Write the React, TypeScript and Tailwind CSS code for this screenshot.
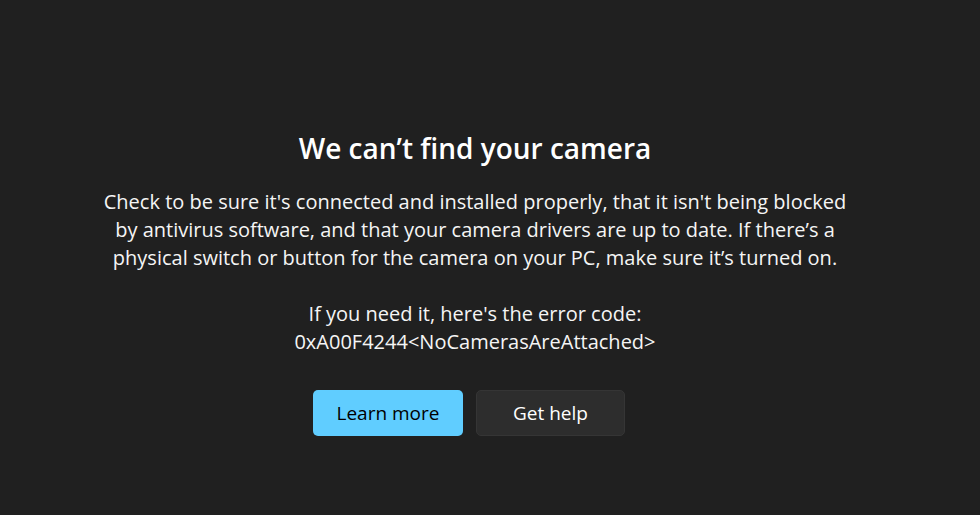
import React from "react";

export default function App() {
  return (
    <div className="w-[980px] h-[515px] bg-[#202020] flex">
      <div
        className="w-[950px] text-white flex flex-col items-center pt-[130px]"
        style={{ fontFamily: '"Open Sans", "Noto Sans", sans-serif' }}
      >
        <h1 className="text-[28px] leading-[36px] font-semibold">
          We can’t find your camera
        </h1>
        <div className="mt-[22px] text-[20px] leading-[28px] text-center text-[#f5f5f5]">
          <p>
            Check to be sure it's connected and installed properly, that it isn't being blocked
            <br />
            by antivirus software, and that your camera drivers are up to date. If there’s a
            <br />
            physical switch or button for the camera on your PC, make sure it’s turned on.
          </p>
          <p className="mt-[28px]">
            If you need it, here's the error code:
            <br />
            0xA00F4244&lt;NoCamerasAreAttached&gt;
          </p>
        </div>
        <div className="mt-[34px] mr-[12px] flex gap-[13px]">
          <button className="w-[150px] h-[46px] rounded-[5px] bg-[#60cdff] text-black text-[19px]">
            Learn more
          </button>
          <button className="w-[149px] h-[46px] rounded-[5px] bg-[#2d2d2d] border border-[#353535] text-white text-[19px]">
            Get help
          </button>
        </div>
      </div>
    </div>
  );
}
